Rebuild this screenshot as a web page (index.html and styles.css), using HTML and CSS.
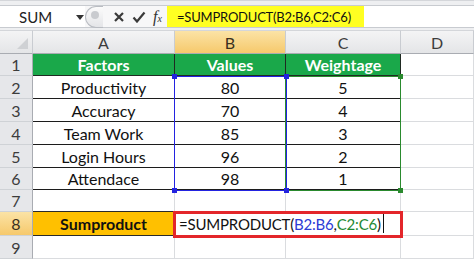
FILE: index.html
```html
<!DOCTYPE html>
<html lang="en">
<head>
    <meta charset="UTF-8">
    <title>SUMPRODUCT</title>
    <link rel="stylesheet" href="styles.css">
</head>
<body>
    <div class="window">
        <div class="formula-bar">
            <div class="name-box">
                <span class="name">SUM</span>
                <svg class="caret" width="8" height="5" viewBox="0 0 8 5"><path d="M0 0h8L4 5z" fill="#333"/></svg>
            </div>
            <div class="fb-tools">
                <span class="grip"><span class="grip-dot"></span></span>
                <svg class="tool" width="12" height="12" viewBox="0 0 12 12"><path d="M2 2l8 8M10 2l-8 8" stroke="#3a3a3a" stroke-width="2.2"/></svg>
                <svg class="tool" width="14" height="12" viewBox="0 0 14 12"><path d="M1.5 6.5l3.5 4 7.5-9" fill="none" stroke="#3a3a3a" stroke-width="2.2"/></svg>
                <span class="fx"><i>f</i><small>x</small></span>
            </div>
            <div class="formula-input">
                <span class="formula-text">=SUMPRODUCT(B2:B6,C2:C6)</span>
            </div>
        </div>

        <div class="grid">
            <div class="corner"><span class="corner-tri"></span></div>
            <div class="col-head">A</div>
            <div class="col-head active">B</div>
            <div class="col-head">C</div>
            <div class="col-head">D</div>

            <div class="row-head">1</div>
            <div class="cell title">Factors</div>
            <div class="cell title">Values</div>
            <div class="cell title">Weightage</div>
            <div class="cell"></div>

            <div class="row-head">2</div>
            <div class="cell boxed">Productivity</div>
            <div class="cell boxed">80</div>
            <div class="cell boxed">5</div>
            <div class="cell"></div>

            <div class="row-head">3</div>
            <div class="cell boxed">Accuracy</div>
            <div class="cell boxed">70</div>
            <div class="cell boxed">4</div>
            <div class="cell"></div>

            <div class="row-head">4</div>
            <div class="cell boxed">Team Work</div>
            <div class="cell boxed">85</div>
            <div class="cell boxed">3</div>
            <div class="cell"></div>

            <div class="row-head">5</div>
            <div class="cell boxed">Login Hours</div>
            <div class="cell boxed">96</div>
            <div class="cell boxed">2</div>
            <div class="cell"></div>

            <div class="row-head">6</div>
            <div class="cell boxed">Attendace</div>
            <div class="cell boxed">98</div>
            <div class="cell boxed">1</div>
            <div class="cell"></div>

            <div class="row-head">7</div>
            <div class="cell"></div>
            <div class="cell"></div>
            <div class="cell"></div>
            <div class="cell"></div>

            <div class="row-head active">8</div>
            <div class="cell result-label">Sumproduct</div>
            <div class="cell editing">=SUMPRODUCT(<span class="ref-b">B2:B6</span>,<span class="ref-c">C2:C6</span>)<span class="text-caret"></span></div>
            <div class="cell"></div>

            <div class="row-head">9</div>
            <div class="cell"></div>
            <div class="cell"></div>
            <div class="cell"></div>
            <div class="cell"></div>

            <!-- rangos resaltados de la formula -->
            <div class="range range-c">
                <span class="handle tr"></span>
                <span class="handle br"></span>
            </div>
            <div class="range range-b">
                <span class="handle tl"></span>
                <span class="handle tr"></span>
                <span class="handle bl"></span>
                <span class="handle br"></span>
            </div>
            <div class="edit-box"></div>
        </div>
    </div>
</body>
</html>
```

FILE: styles.css
```css
* {
    margin: 0;
    padding: 0;
    box-sizing: border-box;
}

body {
    width: 474px;
    height: 259px;
    overflow: hidden;
    background: #ffffff;
    font-family: 'Lato', 'Open Sans', sans-serif;
    color: #111111;
}

.window {
    display: flex;
    flex-direction: column;
}

/* Barra de formulas */
.formula-bar {
    height: 30px;
    display: flex;
    align-items: stretch;
    background: #eeeff1;
    border-top: 1px solid #d4d6da;
    padding: 4px 0 2px 0;
}

.name-box {
    width: 85px;
    background: #ffffff;
    border-top: 1px solid #c8cbd0;
    border-bottom: 1px solid #c8cbd0;
    display: flex;
    align-items: center;
    padding-left: 19px;
    gap: 24px;
}

.name {
    font-size: 15px;
    color: #222222;
}

.caret {
    margin-top: 1px;
}

.fb-tools {
    width: 82px;
    display: flex;
    align-items: center;
    gap: 7px;
    background: #f7f7f8;
    border-top: 1px solid #c8cbd0;
    border-bottom: 1px solid #c8cbd0;
}

.grip {
    width: 18px;
    height: 22px;
    border: 1px solid #b9bcc2;
    border-right: none;
    border-radius: 11px 0 0 11px;
    background: linear-gradient(#fbfbfb, #e4e5e8);
    display: flex;
    align-items: center;
    justify-content: center;
    margin-right: 3px;
}

.grip-dot {
    width: 8px;
    height: 8px;
    border-radius: 50%;
    background: #c9cbcf;
    margin-bottom: 3px;
}

.fx {
    font-family: 'Liberation Serif', serif;
    font-size: 16px;
    color: #333333;
}

.fx small {
    font-size: 10px;
    font-style: italic;
}

.formula-input {
    flex: 1;
    background: #ffffff;
    border-top: 1px solid #c8cbd0;
    border-bottom: 1px solid #c8cbd0;
    display: flex;
}

.formula-text {
    background: #ffff22;
    width: 197px;
    padding-left: 10px;
    font-size: 13px;
    letter-spacing: -0.2px;
    display: flex;
    align-items: center;
    color: #111111;
}

/* Hoja */
.grid {
    position: relative;
    display: grid;
    grid-template-columns: 33px 142px 111px 115px 73px;
    grid-template-rows: 24px 22px 23px 23px 23px 23px 22px 22px 24px 23px;
}

.corner,
.col-head,
.row-head {
    background: linear-gradient(#f4f4f5, #e4e5e7);
    border-right: 1px solid #c9ccd1;
    border-bottom: 1px solid #a9acb2;
    color: #3c3c3c;
    font-size: 16px;
    display: flex;
    align-items: center;
    justify-content: center;
}

.corner {
    position: relative;
    border-top: 1px solid #d4d6da;
}

.corner-tri {
    position: absolute;
    right: 4px;
    bottom: 4px;
    width: 11px;
    height: 11px;
    background: #cfd1d4;
    clip-path: polygon(100% 0, 100% 100%, 0 100%);
}

.col-head {
    border-top: 1px solid #d4d6da;
}

.row-head {
    background: #e6e7ea;
    border-bottom: 1px solid #cfd2d6;
    border-right: 1px solid #a9acb2;
}

.col-head.active,
.row-head.active {
    background: linear-gradient(#fbe3a6, #f6c96c);
    color: #3a3020;
}

.cell {
    border-right: 1px solid #dadcdf;
    border-bottom: 1px solid #dadcdf;
    display: flex;
    align-items: center;
    justify-content: center;
    font-size: 16px;
    white-space: nowrap;
}

.cell.title {
    background: #1aa84a;
    color: #ffffff;
    font-weight: 700;
    border-right: 1px solid #1f2a22;
    border-bottom: 1px solid #1f2a22;
}

.cell.boxed {
    border-right: 1px solid #1c1c1c;
    border-bottom: 1px solid #1c1c1c;
}

.cell.result-label {
    background: #ffc000;
    font-weight: 700;
    border-top: 1px solid #2a2a2a;
    border-bottom: 1px solid #2a2a2a;
    border-right: 1px solid #2a2a2a;
    margin-top: -1px;
}

.cell.editing {
    grid-column: span 2;
    justify-content: flex-start;
    padding-left: 4px;
    font-size: 15px;
    letter-spacing: -0.2px;
}

.ref-b {
    color: #2b3bd6;
}

.ref-c {
    color: #1f8a34;
}

.text-caret {
    width: 1px;
    height: 19px;
    background: #111111;
    margin-left: 2px;
}

/* Resaltado de rangos y celda en edicion */
.range {
    position: absolute;
    top: 46px;
    height: 115px;
    border: 1px solid;
}

.range-b {
    left: 174px;
    width: 113px;
    border-color: #2323e0;
}

.range-c {
    left: 285px;
    width: 116px;
    border-color: #2a8a2e;
}

.handle {
    position: absolute;
    width: 5px;
    height: 5px;
}

.range-b .handle {
    background: #2323e0;
}

.range-c .handle {
    background: #2a8a2e;
}

.handle.tl { left: -3px; top: -3px; }
.handle.tr { right: -3px; top: -3px; }
.handle.bl { left: -3px; bottom: -3px; }
.handle.br { right: -3px; bottom: -3px; }

.edit-box {
    position: absolute;
    left: 173px;
    top: 181px;
    width: 230px;
    height: 27px;
    border: 3px solid #e3262a;
}
```
